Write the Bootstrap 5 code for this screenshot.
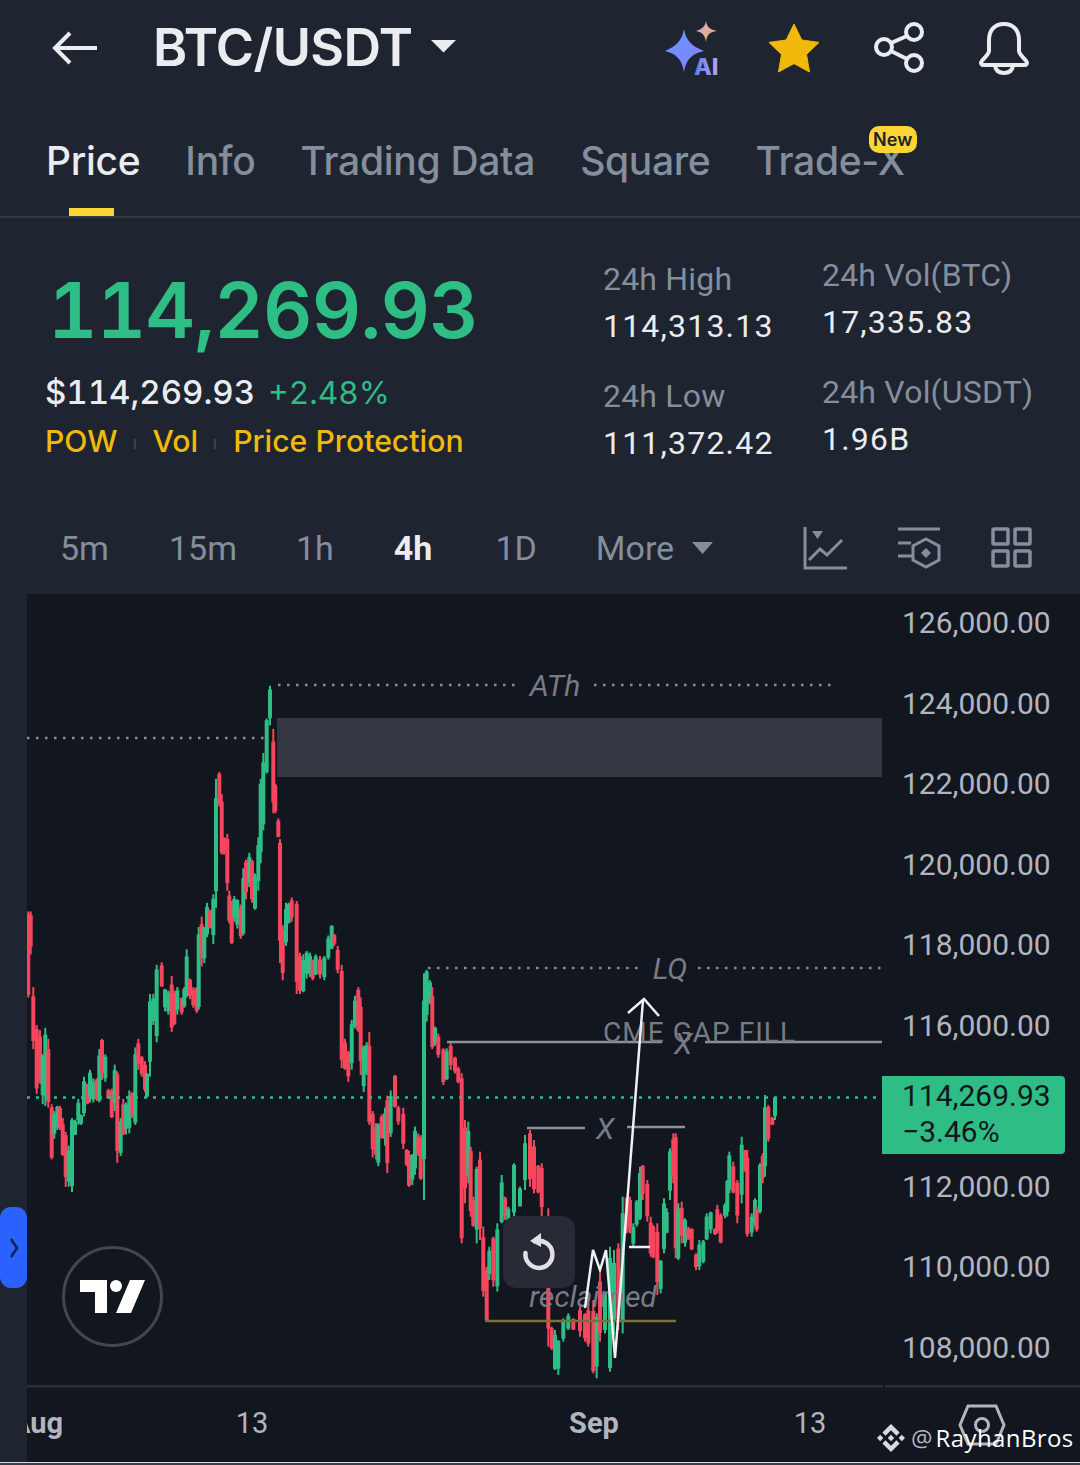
<!DOCTYPE html>
<html lang="en">
<head>
    <meta charset="UTF-8">
    <meta name="viewport" content="width=device-width, initial-scale=1.0">
    <title>BTC/USDT</title>
    <link href="https://cdn.jsdelivr.net/npm/bootstrap@5.3.0/dist/css/bootstrap.min.css" rel="stylesheet">
    <style>
        body {
            background: #1e2530;
            color: #eaecef;
            font-family: Inter, "Liberation Sans", sans-serif;
            font-variant-numeric: tabular-nums;
            width: 1080px;
            height: 1465px;
            overflow: hidden;
        }
        .topbar { height: 96px; padding: 0 50px 0 52px; }
        .pair-name { font-size: 52px; font-weight: 600; letter-spacing: -.6px; margin-left: 55px; line-height: 1; }
        .pair-caret { margin-left: 17px; margin-top: -4px; }
        .top-icons { margin-left: auto; }
        .ai-ic { overflow: visible; }
        .ic-star { margin-left: 47px; }
        .ic-share { margin-left: 53px; }
        .ic-bell { margin-left: 53px; }
        .tabbar { height: 122px; border-bottom: 2px solid #343a45; padding: 0 0 0 46px; gap: 45px; position: relative; }
        .tab-item { font-size: 39px; color: #848e9c; font-weight: 500; font-variant-numeric: normal; line-height: 1; padding-top: 45px; position: relative; letter-spacing: -.3px; }
        .tab-on { color: #eaecef; }
        .tab-on::after { content: ""; position: absolute; left: 23px; width: 45px; height: 8px; background: #fcd535; top: 112px; }
        .new-tag { position: absolute; top: 30px; right: -12px; width: 48px; height: 27px; border-radius: 10px; background: #fcd535; color: #1e2329; font-size: 18px; font-weight: 600; text-align: center; line-height: 27px; letter-spacing: 0; }
        .stats-wrap { height: 292px; }
        .price-side { width: 603px; padding: 49px 0 0 45px; }
        .big-price { font-size: 76.500px; font-weight: 600; color: #2ebd85; line-height: 86px; margin-left: 3px; letter-spacing: -.7px; }
        .usd-line { font-size: 33px; font-weight: 500; margin-top: 19px; line-height: 40px; }
        .up-text { color: #2ebd85; font-size: 31.700px; font-weight: 400; margin-left: 13px; }
        .tag-line { font-size: 30.200px; font-weight: 500; color: #f0b90b; margin-top: 8px; line-height: 40px; }
        .tag-sep { display: inline-block; width: 2px; height: 10px; background: #3b424d; margin: 0 17px 0 16px; vertical-align: 3px; }
        .stat-col { font-family: Roboto, sans-serif; font-size: 32px; line-height: 38px; }
        .stat-col-a { width: 219px; padding-top: 42px; }
        .stat-col-b { padding-top: 38px; }
        .stat-label { color: #848e9c; margin-bottom: 9px; letter-spacing: .2px; }
        .stat-val { color: #eaecef; letter-spacing: 1.200px; margin-bottom: 32px; }
        .stat-col-b .stat-val { margin-bottom: 32px; }
        .tf-bar { height: 84px; font-family: Roboto, sans-serif; font-size: 34px; color: #848e9c; position: relative; padding: 0 0 8px 60px; }
        .tf-item { line-height: 1; }
        .tf-on { color: #eaecef; font-weight: 700; }
        .tf-15 { margin-left: 60px; }
        .tf-1h { margin-left: 59px; }
        .tf-4h { margin-left: 60px; }
        .tf-1d { margin-left: 63px; }
        .tf-more { margin-left: 59px; }
        .tf-caret { margin-left: 18px; }
        .tf-ic-a { margin-left: 90px; }
        .tf-ic-b { margin-left: 50px; }
        .tf-ic-c { margin-left: 50px; }
        .chart-wrap { background: #12161f; height: 868px; }
        .left-strip { width: 27px; background: #1e2530; position: relative; flex: none; }
        .blue-handle { position: absolute; left: 0; top: 613px; width: 27px; height: 81px; background: #2962ff; border-radius: 11px; }
        .plot-row { height: 791px; }
        .plot-area { position: relative; width: 855px; height: 791px; flex: none; }
        .plot-area svg { display: block; }
        .undo-btn { position: absolute; left: 476px; top: 622px; width: 72px; height: 72px; background: #282b35; border-radius: 13px; }
        .tv-logo { position: absolute; left: 35px; top: 652px; width: 101px; height: 101px; border: 3px solid #43464f; border-radius: 50%; }
        .price-axis { width: 198px; font-family: Roboto, sans-serif; font-size: 30px; color: #b2b5be; position: relative; }
        .axis-row { height: 80.500px; line-height: 80.500px; padding-left: 20px; }
        .axis-rows { margin-top: -11px; }
        .last-tag { position: absolute; left: 0; top: 482px; width: 183px; height: 78px; background: #2ebd85; color: #12161f; border-radius: 0 4px 4px 0; padding: 2px 0 0 20px; line-height: 36px; }
        .date-row { display: block; }
        .foot-rule { height: 3px; background: #3b3f49; border-top: 1px solid #d8dade; }
        .water-mark { position: absolute; left: 877px; top: 1422px; font-family: "Open Sans", sans-serif; font-size: 24px; color: #fff; line-height: 32px; letter-spacing: .4px; gap: 6px; word-spacing: -4px; }
        .water-at { color: #b2b5be; }
    </style>
</head>
<body>
    <div class="d-flex align-items-center topbar">
        <svg width="46" height="34" viewBox="0 0 46 34" fill="none" stroke="#eaecef" stroke-width="4"><path d="M45 17H3M18 2 3 17l15 15"/></svg>
        <div class="pair-name">BTC/USDT</div>
        <svg class="pair-caret" width="27" height="14" viewBox="0 0 27 14"><path d="M1 1h25L13.500 13.500z" fill="#eaecef"/></svg>
        <div class="d-flex align-items-center top-icons">
            <svg width="56" height="56" viewBox="0 0 56 56" class="ai-ic">
                <defs>
                    <linearGradient id="aiA" x1="0" y1="0" x2="1" y2="1"><stop offset="0" stop-color="#5f9bff"/><stop offset="1" stop-color="#8a7dff"/></linearGradient>
                    <linearGradient id="aiB" x1="0" y1="0" x2="1" y2="0"><stop offset="0" stop-color="#5b7cf0"/><stop offset="1" stop-color="#b9a5f0"/></linearGradient>
                    <linearGradient id="aiC" x1="0" y1="0" x2="1" y2="1"><stop offset="0" stop-color="#c9b4d8"/><stop offset="1" stop-color="#f2a65a"/></linearGradient>
                </defs>
                <path d="M19 9c2 11 7 17 20 22-13 3-18 9-20 21-2-12-7-18-19-21 12-5 17-11 19-22z" fill="url(#aiA)"/>
                <path d="M41 1c1 6 3 8 11 10-8 1-10 4-11 11-1-7-4-10-10-11 6-2 9-4 10-10z" fill="url(#aiC)"/>
                <text x="29" y="55" font-family="Inter, sans-serif" font-size="23" font-weight="800" fill="url(#aiB)">AI</text>
            </svg>
            <svg width="52" height="50" viewBox="0 0 52 50" class="ic-star"><path d="M26 1l7.800 16 17.200 2.400-12.500 12 3 17.600L26 40.600 10.500 49l3-17.600L1 19.400 18.200 17z" fill="#f0b90b" stroke="#f0b90b" stroke-linejoin="round" stroke-width="1"/></svg>
            <svg width="52" height="52" viewBox="0 0 52 52" fill="none" stroke="#eaecef" stroke-width="4" class="ic-share"><circle cx="41" cy="10" r="8"/><circle cx="11" cy="25" r="8"/><circle cx="41" cy="41" r="8"/><path d="M18 21 34 14M18 29l16 8"/></svg>
            <svg width="52" height="54" viewBox="0 0 52 54" fill="none" stroke="#eaecef" stroke-width="4" stroke-linejoin="round" class="ic-bell"><path d="M26 3c-10 0-15 7-15 16v11c0 4-8 9-8 12 0 1 1 2 2 2h42c1 0 2-1 2-2 0-3-8-8-8-12V19c0-9-5-16-15-16z"/><path d="M17 45c1 5 5 7 9 7s8-2 9-7"/></svg>
        </div>
    </div>

    <div class="d-flex tabbar">
        <div class="tab-item tab-on">Price</div>
        <div class="tab-item">Info</div>
        <div class="tab-item">Trading Data</div>
        <div class="tab-item">Square</div>
        <div class="tab-item">Trade-X<span class="new-tag">New</span></div>
    </div>

    <div class="d-flex stats-wrap">
        <div class="price-side">
            <div class="big-price">114,269.93</div>
            <div class="usd-line">$114,269.93<span class="up-text">+2.48%</span></div>
            <div class="tag-line">POW<span class="tag-sep"></span>Vol<span class="tag-sep"></span>Price Protection</div>
        </div>
        <div class="stat-col stat-col-a">
            <div class="stat-label">24h High</div>
            <div class="stat-val">114,313.13</div>
            <div class="stat-label">24h Low</div>
            <div class="stat-val">111,372.42</div>
        </div>
        <div class="stat-col stat-col-b">
            <div class="stat-label">24h Vol(BTC)</div>
            <div class="stat-val">17,335.83</div>
            <div class="stat-label">24h Vol(USDT)</div>
            <div class="stat-val">1.96B</div>
        </div>
    </div>

    <div class="d-flex align-items-center tf-bar">
        <div class="tf-item">5m</div>
        <div class="tf-item tf-15">15m</div>
        <div class="tf-item tf-1h">1h</div>
        <div class="tf-item tf-on tf-4h">4h</div>
        <div class="tf-item tf-1d">1D</div>
        <div class="tf-item tf-more">More</div>
        <svg width="21" height="12" viewBox="0 0 21 12" class="tf-caret"><path d="M0 0h21L10.500 12z" fill="#848e9c"/></svg>
        <svg width="44" height="44" viewBox="0 0 44 44" fill="none" stroke="#848e9c" stroke-width="3" class="tf-ic-a"><path d="M2 1v41h42"/><path d="M6 34 17 23l7 6 15-15"/><path d="M9 5h11l-5.500 8z" fill="#848e9c" stroke="none"/></svg>
        <svg width="44" height="44" viewBox="0 0 44 44" fill="none" stroke="#848e9c" stroke-width="3" class="tf-ic-b"><path d="M1 3h42M1 17h13M1 30h14"/><path d="M29 13l13 7v14l-13 7-13-7V20z"/><path d="M29 22l5 5-5 5-5-5z" fill="#848e9c" stroke="none"/></svg>
        <svg width="42" height="42" viewBox="0 0 42 42" fill="none" stroke="#848e9c" stroke-width="3.500" class="tf-ic-c"><rect x="2" y="2" width="15" height="15" rx="1"/><rect x="24" y="2" width="15" height="15" rx="1"/><rect x="2" y="24" width="15" height="15" rx="1"/><rect x="24" y="24" width="15" height="15" rx="1"/></svg>
    </div>

    <div class="d-flex chart-wrap">
        <div class="left-strip">
            <div class="blue-handle d-flex align-items-center justify-content-center">
                <svg width="10" height="20" viewBox="0 0 10 20" fill="none" stroke="#10204f" stroke-width="2.500"><path d="M2 1l6 9-6 9"/></svg>
            </div>
        </div>
        <div class="flex-grow-1">
            <div class="d-flex plot-row">
                <div class="plot-area">
                    <svg id="plot" width="855" height="791" viewBox="27 594 855 791">
                        <rect x="277" y="718" width="605" height="59" fill="#343641"/>
                        <g id="bars"></g>
                        <g fill="none" stroke="#8a8d96" stroke-width="2.500" stroke-dasharray="2.500 6.500">
                            <path d="M278 685H516M594 685H832M27 738H266M428 968H640M698 968H882"/>
                        </g>
                        <path d="M27 1097.500H882" stroke="#2ebd85" stroke-width="2.500" stroke-dasharray="3 6"/>
                        <g fill="none" stroke="#8d9098" stroke-width="2.500">
                            <path d="M447 1042H662M705 1042H882M527 1128H585M627 1127H685"/>
                        </g>
                        <path d="M485 1321H676" stroke="#7d6f3c" stroke-width="2.500"/>
                        <g font-family="Roboto, sans-serif" fill="#787b86">
                            <text x="555" y="696" font-size="30" font-style="italic" text-anchor="middle">ATh</text>
                            <text x="670" y="979" font-size="30" font-style="italic" text-anchor="middle">LQ</text>
                            <text x="603" y="1042" font-size="28" textLength="192">CME GAP FILL</text>
                            <text x="683" y="1054" font-size="30" font-style="italic" text-anchor="middle">X</text>
                            <text x="605" y="1139" font-size="30" font-style="italic" text-anchor="middle">X</text>
                            <text x="593" y="1307" font-size="30" font-style="italic" text-anchor="middle">reclaimed</text>
                        </g>
                        <g fill="none" stroke="#eef0f3" stroke-width="2.500">
                            <path d="M585 1308 593 1250 600 1270 606 1250 615 1358 643 1000"/>
                            <path d="M628 1013 644 999 659 1016M629 1247H650"/>
                        </g>
                    </svg>
                    <div class="undo-btn d-flex align-items-center justify-content-center">
                        <svg width="36" height="38" viewBox="0 0 36 38" fill="none" stroke="#dfe1e6" stroke-width="4.500"><path d="M14 8.500A13.500 13.500 0 1 1 4.500 20" stroke-linecap="round"/><path d="M20 0v14L9 8z" fill="#dfe1e6" stroke="none"/></svg>
                    </div>
                    <div class="tv-logo d-flex align-items-center justify-content-center">
                        <svg width="66" height="34" viewBox="0 0 66 34" fill="#fff"><path d="M0 0h27v33H15V12H0z"/><circle cx="36" cy="6" r="6"/><path d="M50 0h15L51 33H36z"/></svg>
                    </div>
                </div>
                <div class="price-axis">
                    <div class="axis-rows">
                        <div class="axis-row">126,000.00</div>
                        <div class="axis-row">124,000.00</div>
                        <div class="axis-row">122,000.00</div>
                        <div class="axis-row">120,000.00</div>
                        <div class="axis-row">118,000.00</div>
                        <div class="axis-row">116,000.00</div>
                        <div class="axis-row"></div>
                        <div class="axis-row">112,000.00</div>
                        <div class="axis-row">110,000.00</div>
                        <div class="axis-row">108,000.00</div>
                    </div>
                    <div class="last-tag">114,269.93<br>&minus;3.46%</div>
                </div>
            </div>
            <svg class="date-row" width="1053" height="77" viewBox="27 1385 1053 77">
                <path d="M27 1386H883M885 1386H1080" stroke="#2a2e39" stroke-width="3"/>
                <g font-family="Roboto, sans-serif" font-size="29" fill="#b2b5be" text-anchor="middle">
                    <text x="37" y="1433" font-weight="700">Aug</text>
                    <text x="252" y="1433">13</text>
                    <text x="594" y="1433" font-weight="700">Sep</text>
                    <text x="810" y="1433">13</text>
                </g>
                <g fill="none" stroke="#b2b5be" stroke-width="3">
                    <path d="M968 1406H996L1004 1425 996 1444H968L960 1425z"/>
                    <circle cx="982" cy="1425" r="6.500"/>
                </g>
            </svg>
        </div>
    </div>
    <div class="foot-rule"></div>

    <div class="water-mark d-flex align-items-center">
        <svg width="28" height="28" viewBox="0 0 126.610 126.610" fill="#d8dade">
            <path d="M38.730 53.200l24.590-24.580 24.600 24.600 14.300-14.310L63.320 0 24.430 38.900z"/>
            <path d="M0 63.310l14.300-14.310 14.310 14.310-14.310 14.300z"/>
            <path d="M38.730 73.410L63.320 98l24.600-24.600 14.310 14.290-38.900 38.910-38.910-38.880z"/>
            <path d="M98 63.310l14.300-14.310 14.310 14.300-14.310 14.320z"/>
            <path d="M77.830 63.300L63.320 48.780 48.810 63.280l14.510 14.500z"/>
        </svg>
        <span><span class="water-at">@</span> RayhanBros</span>
    </div>

    <script>
        // candles traced from the chart: x, high, low, 1 = up
        const first = [[85,730,980,0],[92,730,855,0],[100,950,1130,0],[110,1060,1260,0],[120,1075,1230,0],[128,1145,1290,1],[136,1068,1295,1],[145,1100,1300,0],[155,1290,1450,0],[163,1310,1390,1],[172,1295,1365,1],[180,1295,1365,0],[188,1330,1440,0],[197,1370,1530,0],[206,1410,1530,1],[216,1330,1545,1],[225,1335,1380,1],[235,1275,1350,1],[243,1320,1350,1],[252,1210,1325,1],[262,1230,1290,0],[270,1190,1285,1],[280,1215,1285,1],[290,1215,1280,0],[298,1130,1285,1],[306,1100,1220,0],[316,1145,1225,1],[325,1245,1275,0],[335,1245,1330,0],[344,1175,1310,1],[352,1195,1460,0],[362,1330,1440,1],[370,1275,1380,0],[378,1285,1378,1],[388,1250,1375,1],[397,1255,1330,0],[406,1125,1350,1],[415,1100,1190,0],[425,1150,1210,0],[435,1165,1255,0],[441,1200,1270,1],[450,970,1210,1],[460,970,1060,1],[470,885,1110,1],[485,878,950,0],[495,955,1020,1],[505,960,1030,1],[515,918,1080,0],[523,960,1060,0],[532,950,1030,1],[545,980,1030,0],[553,950,1010,1],[560,840,980,1],[570,925,985,0],[580,950,1010,0],[590,950,1025,0],[596,775,1015,1],[605,745,890,0],[613,775,880,1],[621,705,805,1],[630,725,780,0],[640,680,825,1],[648,345,720,1],[658,325,425,0],[665,390,565,0],[672,515,565,0],[682,505,670,0],[688,670,765,0],[695,700,825,0],[703,685,760,1],[712,695,780,1],[722,710,810,0],[730,605,800,1],[738,580,695,0],[748,560,660,1],[756,580,705,0],[765,620,725,1],[775,515,670,1],[782,345,590,1],[790,270,495,1],[800,170,330,1],[810,75,190,1],[820,200,445,0],[826,360,445,0],[835,460,515,0],[840,520,880,0],[848,770,930,0],[858,705,830,1],[866,705,765,1],[875,690,760,0],[890,700,970,0],[900,850,970,0],[910,855,965,1],[920,845,925,1],[930,850,920,1],[938,870,930,0],[947,855,915,1],[960,860,925,0],[973,860,930,1],[985,800,870,1],[995,770,840,1],[1003,795,830,0],[1013,830,910,0],[1025,885,1185,0],[1035,1100,1190,0],[1045,1135,1225,0],[1055,1045,1190,1],[1065,975,1070,1],[1075,950,1080,0],[1082,980,1205,0],[1091,1120,1255,1],[1100,1110,1205,1],[1108,1080,1350,0],[1118,1310,1445,0],[1128,1345,1450,0],[1135,1345,1470,1],[1145,1320,1390,0],[1155,1300,1410,1],[1162,1265,1490,0],[1172,1250,1385,1],[1185,1205,1300,0],[1195,1295,1350,0],[1210,1300,1420,0],[1220,1420,1470,0],[1227,1425,1530,0],[1237,1435,1525,1],[1245,1355,1495,1],[1255,1375,1440,0],[1262,1380,1510,0],[1272,910,1568,1],[1280,900,1050,1],[1290,930,1000,1],[1297,950,1130,0],[1305,1065,1120,1],[1315,1085,1155,0]];
        const second = [[10,205,315,0],[20,205,300,1],[32,185,270,0],[45,230,280,0],[55,260,310,0],[65,280,790,0],[75,420,670,0],[85,425,610,1],[92,500,710,0],[100,650,740,0],[110,560,790,1],[120,515,780,0],[130,740,950,0],[140,860,1025,0],[148,800,900,1],[160,770,920,0],[172,730,935,1],[185,585,730,1],[195,650,720,0],[205,680,730,1],[222,550,710,1],[240,620,680,1],[255,465,630,1],[270,450,620,0],[282,480,640,0],[295,555,640,0],[305,550,710,0],[325,685,1100,0],[335,1040,1110,0],[345,1050,1170,1],[355,1080,1185,1],[370,1015,1085,1],[385,1000,1050,1],[400,1015,1050,0],[420,980,1070,0],[435,1000,1085,0],[445,980,1100,0],[460,960,1180,0],[470,1000,1195,1],[480,880,1085,0],[495,935,1060,1],[510,800,1175,1],[522,810,1065,1],[535,790,1050,0],[548,650,1060,1],[560,650,760,0],[570,650,760,0],[580,730,800,1],[590,660,740,1],[600,560,720,1],[608,555,660,0],[622,600,725,0],[632,710,830,0],[640,735,835,0],[652,730,945,0],[662,840,940,1],[672,655,820,1],[680,685,760,1],[690,505,660,1],[700,460,610,0],[707,460,835,0],[715,670,840,1],[725,665,790,0],[735,715,800,1],[745,740,780,0],[755,745,810,0],[768,820,870,0],[778,780,870,1],[790,780,850,1],[800,700,780,1],[812,695,760,1],[825,745,765,0],[832,675,760,0],[842,700,790,0],[855,670,715,1],[862,600,710,1],[868,515,640,1],[880,545,640,0],[892,600,730,0],[905,470,670,1],[915,510,575,0],[922,510,770,0],[935,700,770,1],[945,655,740,1],[950,680,755,0],[960,550,700,1],[968,520,610,0],[975,345,590,1],[985,375,485,0],[997,410,435,0],[1005,350,420,1]];

        // first crop came back a little squashed vertically, hence 2.904
        const candles = first.map(c => [c[0] / 3, c[1] / 2.904 + 660, c[2] / 2.904 + 660, c[3]])
            .concat(second.map(c => [c[0] / 3 + 440, c[1] / 3 + 980, c[2] / 3 + 980, c[3]]));

        let svg = '';
        candles.forEach((c, i) => {
            const color = c[3] ? '#2ebd85' : '#f6465d';
            const h = c[2] - c[1];
            const top = c[1] + h * (0.03 + (i * 7 % 5) * 0.03);
            const bottom = c[2] - h * (0.03 + (i * 3 % 4) * 0.05);
            svg += `<rect x="${(c[0] - 1).toFixed(1)}" y="${c[1].toFixed(1)}" width="2" height="${h.toFixed(1)}" fill="${color}"/>`;
            svg += `<rect x="${(c[0] - 2).toFixed(1)}" y="${top.toFixed(1)}" width="4" height="${(bottom - top).toFixed(1)}" fill="${color}"/>`;
        });
        document.getElementById('bars').innerHTML = svg;
    </script>
    <script src="https://cdn.jsdelivr.net/npm/bootstrap@5.3.0/dist/js/bootstrap.bundle.min.js"></script>
</body>
</html>
